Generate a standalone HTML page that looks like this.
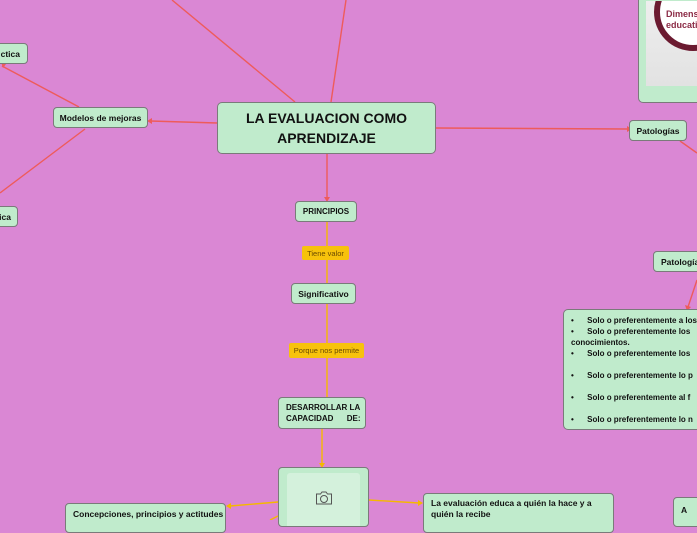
<!DOCTYPE html>
<html><head><meta charset="utf-8"><style>
html,body{margin:0;padding:0}
body{width:697px;height:520px;overflow:hidden;position:relative;background:#da87d4;font-family:"Liberation Sans",sans-serif}
.n{position:absolute;background:#c0ebcc;border:1px solid #7a7a7a;border-radius:4px;box-sizing:border-box;font-weight:bold;color:#111;font-size:8.5px;display:flex;align-items:center;justify-content:center;white-space:nowrap;overflow:hidden}
.y{position:absolute;background:#f7c20c;border-radius:2px;font-size:7.5px;color:#6a4a00;display:flex;align-items:center;justify-content:center;white-space:nowrap}
svg{position:absolute;left:0;top:0}
</style></head><body>
<svg width="697" height="520">
<g stroke="#ee5b5b" stroke-width="1.4" fill="none">
<line x1="295" y1="102" x2="172" y2="0"/>
<line x1="331" y1="102" x2="346" y2="0"/>
<line x1="436" y1="128" x2="627" y2="129"/>
<line x1="680" y1="141" x2="697" y2="153"/>
<line x1="327" y1="154" x2="327" y2="199"/>
<line x1="217" y1="123" x2="150" y2="121"/>
<line x1="79" y1="107" x2="2" y2="66"/>
<line x1="85" y1="129" x2="0" y2="193"/>
<line x1="697" y1="280" x2="688" y2="307"/>
</g>
<g fill="#ee5b5b">
<polygon points="627,126 627,132 632,129"/>
<polygon points="324,197 330,197 327,202"/>
<polygon points="152,118 152,124 147,121"/>
<polygon points="1,62 6,64 3,68"/>
<polygon points="685,305 691,307 687,311"/>
</g>
<g stroke="#f5b800" stroke-width="1.4" fill="none">
<line x1="327" y1="222" x2="327" y2="246"/>
<line x1="327" y1="260" x2="327" y2="283"/>
<line x1="327" y1="304" x2="327" y2="343"/>
<line x1="327" y1="358" x2="327" y2="397"/>
<line x1="322" y1="428" x2="322" y2="464"/>
<line x1="278" y1="502" x2="230" y2="506"/>
<line x1="369" y1="500" x2="419" y2="503"/>
<line x1="278" y1="516" x2="270" y2="520"/>
</g>
<g fill="#f5b800">
<polygon points="319,463 325,463 322,468"/>
<polygon points="231,503 231,509 226,506"/>
<polygon points="418,500 418,506 423,503"/>
</g>
</svg>

<div class="n" style="left:217px;top:102px;width:219px;height:52px;font-size:14px;line-height:20px;white-space:normal;text-align:center;border-radius:5px">LA EVALUACION COMO<br>APRENDIZAJE</div>
<div class="n" style="left:53px;top:107px;width:95px;height:21px">Modelos de mejoras</div>
<div class="n" style="left:-40px;top:43px;width:68px;height:21px;justify-content:flex-end;padding-right:7px">ctica</div>
<div class="n" style="left:-40px;top:206px;width:58px;height:21px;justify-content:flex-end;padding-right:6px">ica</div>
<div class="n" style="left:295px;top:201px;width:62px;height:21px;font-size:8px">PRINCIPIOS</div>
<div class="y" style="left:302px;top:246px;width:47px;height:14px">Tiene valor</div>
<div class="n" style="left:291px;top:283px;width:65px;height:21px">Significativo</div>
<div class="y" style="left:289px;top:343px;width:75px;height:15px">Porque nos permite</div>
<div class="n" style="left:278px;top:397px;width:88px;height:32px;white-space:pre;justify-content:flex-start;padding-left:7px;font-size:8px;line-height:11px">DESARROLLAR LA
CAPACIDAD      DE:</div>
<div class="n" style="left:278px;top:467px;width:91px;height:60px;align-items:flex-start">
<div style="margin-top:5px;width:73px;height:60px;background:#d4f1dc;border-radius:3px;display:flex;justify-content:center">
<svg style="position:static;margin-top:17px" width="18" height="16" viewBox="0 0 18 16"><path d="M1.5 4h4l1.5-2h4l1.5 2h4v10h-15z" fill="none" stroke="#555" stroke-width="1"/><circle cx="9" cy="9" r="3.5" fill="none" stroke="#555" stroke-width="1"/></svg>
</div></div>
<div class="n" style="left:65px;top:503px;width:161px;height:30px;justify-content:flex-start;padding-left:7px;align-items:flex-start;padding-top:5px">Concepciones, principios y actitudes</div>
<div class="n" style="left:423px;top:493px;width:191px;height:40px;justify-content:flex-start;align-items:flex-start;padding:4px 7px;white-space:normal;line-height:11px">La evaluación educa a quién la hace y a quién la recibe</div>
<div class="n" style="left:629px;top:120px;width:58px;height:21px">Patologías</div>
<div class="n" style="left:653px;top:251px;width:60px;height:21px;justify-content:flex-start;padding-left:7px">Patologías</div>
<div class="n" style="left:673px;top:497px;width:40px;height:30px;justify-content:flex-start;padding-left:7px;align-items:flex-start;padding-top:7px">A</div>
<div class="n" style="left:638px;top:-10px;width:70px;height:113px;border-radius:5px;align-items:flex-start;justify-content:flex-start">
<div style="margin:10px 0 0 7px;width:60px;height:85px;background:linear-gradient(#eeeeee,#e2e2e2);position:relative;overflow:hidden">
<div style="position:absolute;left:8px;top:-28px;width:78px;height:78px;box-sizing:border-box;border-radius:50%;border:6px solid #6b1a30;background:#fff"></div>
<div style="position:absolute;left:20px;top:8px;font-size:9px;line-height:11px;color:#8b2a45;font-weight:bold;font-family:'Liberation Sans Narrow','Liberation Sans',sans-serif">Dimensi<br>educati</div>
</div></div>
<div class="n" style="left:563px;top:309px;width:150px;height:121px;display:block;padding:5px 0 0 7px;font-size:8px;line-height:11px;white-space:pre;border-radius:5px">•      Solo o preferentemente a los
•      Solo o preferentemente los
conocimientos.
•      Solo o preferentemente los

•      Solo o preferentemente lo p

•      Solo o preferentemente al f

•      Solo o preferentemente lo n</div>
</body></html>
